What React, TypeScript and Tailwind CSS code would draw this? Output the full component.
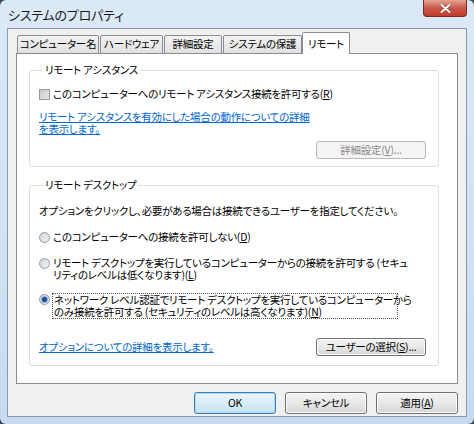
import React from "react";

const font = "font-['Noto_Sans_CJK_JP','Noto_Sans',sans-serif] [font-feature-settings:'palt']";

function U({ children }: { children: React.ReactNode }) {
  return <span className="underline underline-offset-[1px]">{children}</span>;
}

function Checkbox() {
  return (
    <span className="inline-block w-[11px] h-[11px] border border-[#9a9a9a] bg-gradient-to-br from-[#c8c8c8] to-[#e6e6e6] shrink-0" />
  );
}

function Radio({ checked = false }: { checked?: boolean }) {
  return (
    <span className="flex items-center justify-center w-[11px] h-[11px] rounded-full border border-[#8e9aa6] bg-gradient-to-br from-[#cfd3d6] to-[#f4f4f4] shrink-0">
      {checked && <span className="w-[5px] h-[5px] rounded-full bg-[#1f4f8f] shadow-[0_0_0_1px_#7fb0e0]" />}
    </span>
  );
}

function Button({
  children,
  w = "w-[110px]",
  h = "h-[18px]",
  disabled = false,
  primary = false,
}: {
  children: React.ReactNode;
  w?: string;
  h?: string;
  disabled?: boolean;
  primary?: boolean;
}) {
  const base = "flex items-center justify-center rounded-[3px] text-[10.5px] tracking-[-0.25px] leading-none";
  if (disabled)
    return <div className={`${base} ${w} ${h} border border-[#b5b9bc] bg-[#f4f4f4] text-[#8a8a8a]`}>{children}</div>;
  if (primary)
    return (
      <div className={`${base} ${w} ${h} border border-[#3c7fb1] bg-gradient-to-b from-[#eaf6fd] to-[#c7e3f4] shadow-[inset_0_0_0_1px_#a8d8f2] text-black`}>
        {children}
      </div>
    );
  return (
    <div className={`${base} ${w} ${h} border border-[#707070] bg-gradient-to-b from-[#f3f3f3] via-[#e8e8e8] to-[#d6d6d6] shadow-[inset_0_0_0_1px_#fcfcfc] text-black`}>
      {children}
    </div>
  );
}

const tabs = [
  { label: "コンピューター名", w: "w-[82px]" },
  { label: "ハードウェア", w: "w-[63px]" },
  { label: "詳細設定", w: "w-[58px]" },
  { label: "システムの保護", w: "w-[79px]" },
];

export default function App() {
  return (
    <div className={`w-[474px] h-[424px] bg-[#3b4856] ${font} text-black`}>
      <div className="h-full rounded-[6px] bg-gradient-to-b from-[#dbe9f7] via-[#d2e3f4] to-[#c6dbf0] flex flex-col px-[7px] pb-[7px]">
        {/* title bar */}
        <div className="h-[28px] flex items-start justify-between shrink-0">
          <div className="pt-[6px] pl-[1px] text-[13px] leading-[18px] text-[#1a1a1a] tracking-[-0.2px]">システムのプロパティ</div>
          <div className="w-[44px] h-[17px] rounded-b-[4px] border border-t-0 border-[#7a2a22] bg-gradient-to-b from-[#e3a398] via-[#c9584a] to-[#c23a2b] flex items-center justify-center">
            <svg width="11" height="9" viewBox="0 0 11 9">
              <path d="M1.5 1 L9.5 8 M9.5 1 L1.5 8" stroke="#3a0d08" strokeWidth="3" strokeLinecap="round" opacity="0.4" />
              <path d="M1.5 1 L9.5 8 M9.5 1 L1.5 8" stroke="white" strokeWidth="2" strokeLinecap="round" />
            </svg>
          </div>
        </div>

        {/* client */}
        <div className="flex-1 border border-[#8c9bab] bg-[#f0f0f0] flex flex-col px-[8px] pt-[3px]">
          {/* tabs */}
          <div className="h-[21px] flex items-end pl-[1px] text-[10.5px] tracking-[-0.25px] leading-none whitespace-nowrap">
            {tabs.map((t) => (
              <div
                key={t.label}
                className={`${t.w} h-[19px] mr-[1px] -mb-px border border-[#898c95] rounded-t-[2px] bg-gradient-to-b from-[#f3f3f3] to-[#e1e1e1] flex items-center justify-center`}
              >
                {t.label}
              </div>
            ))}
            <div className="w-[48px] h-[22px] -mb-px -ml-[1px] border border-b-0 border-[#898c95] rounded-t-[2px] bg-white flex items-center justify-center relative z-10 pt-[1px]">
              リモート
            </div>
          </div>

          {/* panel */}
          <div className="h-[331px] border border-[#898c95] bg-white pl-[12px] text-[10.5px] tracking-[-0.25px]">
            {/* remote assistance */}
            <fieldset className="mt-[10px] w-[410px] border border-[#d5dfe5] rounded-[3px] pl-[9px] pr-[12px] pb-[7px] flex flex-col">
              <legend className="ml-[4px] px-[2px] leading-[12px]">リモート アシスタンス</legend>
              <div className="mt-[12px] flex items-center gap-[3px] leading-[12px] whitespace-nowrap">
                <Checkbox />
                <span>
                  このコンピューターへのリモート アシスタンス接続を許可する(<U>R</U>)
                </span>
              </div>
              <div className="mt-[11px] text-[#0066cc] underline underline-offset-[1px] leading-[12px] whitespace-nowrap">
                リモート アシスタンスを有効にした場合の動作についての詳細
                <br />
                を表示します。
              </div>
              <div className="mt-[6px] self-end">
                <Button disabled>
                  詳細設定(<U>V</U>)...
                </Button>
              </div>
            </fieldset>

            {/* remote desktop */}
            <fieldset className="mt-[12px] w-[410px] border border-[#d5dfe5] rounded-[3px] pl-[9px] pr-[12px] pb-[9px] flex flex-col">
              <legend className="ml-[4px] px-[2px] leading-[12px]">リモート デスクトップ</legend>
              <div className="mt-[14px] leading-[12px] whitespace-nowrap">
                オプションをクリックし、必要がある場合は接続できるユーザーを指定してください。
              </div>
              <div className="mt-[14px] flex items-center gap-[3px] leading-[12px] whitespace-nowrap">
                <Radio />
                <span>
                  このコンピューターへの接続を許可しない(<U>D</U>)
                </span>
              </div>
              <div className="mt-[14px] flex items-start gap-[3px] leading-[12px] whitespace-nowrap">
                <span className="mt-[1px]">
                  <Radio />
                </span>
                <span>
                  リモート デスクトップを実行しているコンピューターからの接続を許可する (セキュ
                  <br />
                  リティのレベルは低くなります)(<U>L</U>)
                </span>
              </div>
              <div className="mt-[12px] flex items-start gap-[2px] leading-[12px] whitespace-nowrap">
                <span className="mt-[1px]">
                  <Radio checked />
                </span>
                <span className="border border-dotted border-[#555] px-[1px] w-[346px]">
                  ネットワーク レベル認証でリモート デスクトップを実行しているコンピューターから
                  <br />
                  のみ接続を許可する (セキュリティのレベルは高くなります)(<U>N</U>)
                </span>
              </div>
              <div className="mt-[19px] flex items-center justify-between">
                <span className="text-[#0066cc] underline underline-offset-[1px] leading-[12px]">
                  オプションについての詳細を表示します。
                </span>
                <Button>
                  ユーザーの選択(<U>S</U>)...
                </Button>
              </div>
            </fieldset>
          </div>

          {/* dialog buttons */}
          <div className="mt-[8px] flex justify-end gap-[9px]">
            <Button primary w="w-[82px]" h="h-[22px]">
              OK
            </Button>
            <Button w="w-[82px]" h="h-[22px]">
              キャンセル
            </Button>
            <Button w="w-[82px]" h="h-[22px]">
              適用(<U>A</U>)
            </Button>
          </div>
        </div>
      </div>
    </div>
  );
}
